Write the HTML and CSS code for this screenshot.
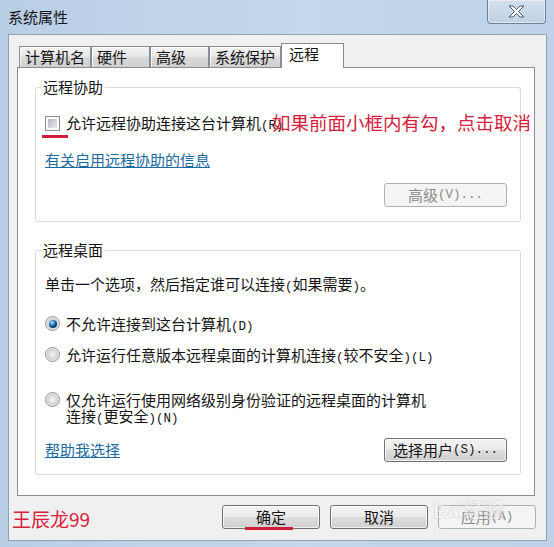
FILE: index.html
```html
<!DOCTYPE html>
<html lang="zh-CN">
<head>
<meta charset="utf-8">
<title>系统属性</title>
<link rel="stylesheet" href="styles.css">
</head>
<body>
<div class="window">
  <div class="titlebar">
    <span class="title">系统属性</span>
    <div class="close">
      <svg width="17" height="13" viewBox="0 0 17 13"><polygon points="1,1 5,1 8.5,4.6 12,1 16,1 10.5,6.5 16,12 12,12 8.5,8.4 5,12 1,12 6.5,6.5" fill="#fff" stroke="#46566b" stroke-width="1" stroke-linejoin="round"/></svg>
    </div>
  </div>
  <div class="client">
    <div class="tabs">
      <div class="tab">计算机名</div>
      <div class="tab">硬件</div>
      <div class="tab">高级</div>
      <div class="tab">系统保护</div>
      <div class="tab active">远程</div>
    </div>
    <div class="panel">
      <div class="group">
        <div class="group-title">远程协助</div>
        <div class="check-row">
          <span class="checkbox"></span>
          <span>允许远程协助连接这台计算机<span class="l">(R)</span></span>
          <span class="mark mark-check"></span>
          <span class="note">如果前面小框内有勾，点击取消</span>
        </div>
        <a class="link link-first">有关启用远程协助的信息</a>
        <div class="btn-row">
          <button class="btn wide disabled">高级<span class="l">(V)...</span></button>
        </div>
      </div>
      <div class="group group2">
        <div class="group-title">远程桌面</div>
        <div class="desc">单击一个选项，然后指定谁可以连接<span class="l">(</span>如果需要<span class="l">)</span>。</div>
        <div class="radio-row r1"><span class="radio on"></span><span>不允许连接到这台计算机<span class="l">(D)</span></span></div>
        <div class="radio-row r2"><span class="radio"></span><span>允许运行任意版本远程桌面的计算机连接<span class="l">(</span>较不安全<span class="l">)(L)</span></span></div>
        <div class="radio-row r3"><span class="radio"></span><span>仅允许运行使用网络级别身份验证的远程桌面的计算机<br>连接<span class="l">(</span>更安全<span class="l">)(N)</span></span></div>
        <div class="bottom-row">
          <a class="link">帮助我选择</a>
          <button class="btn wide">选择用户<span class="l">(S)...</span></button>
        </div>
      </div>
    </div>
    <div class="footer">
      <span class="sign">王辰龙99</span>
      <div class="footer-buttons">
        <button class="btn foot">确定<span class="mark mark-ok"></span></button>
        <button class="btn foot">取消</button>
        <button class="btn foot disabled">应用<span class="l">(A)</span><span class="wm">Bai经验</span></button>
      </div>
    </div>
  </div>
</div>
</body>
</html>
```
FILE: styles.css
```css
body {
  margin: 0;
  width: 554px;
  height: 547px;
  overflow: hidden;
  background: linear-gradient(to right, #b9cfe6, #c4d7eb 55%, #bdd2e8);
  font-family: "Noto Sans CJK SC", sans-serif;
  font-size: 15px;
  color: #151515;
}

.window {
  display: flex;
  flex-direction: column;
  height: 547px;
}

.titlebar {
  height: 34px;
  display: flex;
  justify-content: space-between;
  align-items: flex-start;
  flex: none;
}

.title {
  padding: 9px 0 0 8px;
  line-height: 16px;
}

.close {
  width: 59px;
  height: 24px;
  box-sizing: border-box;
  margin-right: 8px;
  border: 1px solid #6f8199;
  border-top: none;
  border-radius: 0 0 4px 4px;
  background: linear-gradient(#d3dfec, #c0d1e4);
  box-shadow: inset 0 0 0 1px rgba(255, 255, 255, 0.45);
  display: flex;
  align-items: center;
  justify-content: center;
}

.close svg {
  display: block;
}

.client {
  margin: 0 7px 0 8px;
  border: 1px solid #8fa1b6;
  background: #f0f0f0;
  padding: 8px 11px 9px 8px;
}

.l {
  font-family: "Liberation Mono", monospace;
  font-size: 12.5px;
  line-height: 0;
}

/* tabs */
.tabs {
  display: flex;
  align-items: flex-end;
  height: 25px;
  margin-bottom: -1px;
  padding-left: 2px;
  position: relative;
  z-index: 1;
}

.tab {
  box-sizing: border-box;
  height: 21px;
  margin-bottom: 1px;
  min-width: 59px;
  padding: 0 5px;
  line-height: 19px;
  border: 1px solid #898c95;
  border-bottom: none;
  background: linear-gradient(#f4f4f4, #e7e7e7 45%, #d8d8d8 55%, #d0d0d0);
  box-shadow: inset 1px 1px 0 rgba(255, 255, 255, 0.8);
}

.tab.active {
  height: 25px;
  margin-bottom: 0;
  min-width: 63px;
  padding: 0 7px;
  line-height: 19px;
  background: #fff;
  box-shadow: none;
}

/* panel */
.panel {
  background: #fff;
  border: 1px solid #898c95;
  padding: 19px 13px 20px 17px;
}

.group {
  border: 1px solid #d5dbe0;
  border-radius: 3px;
  padding: 0 13px 14px 9px;
}

.group2 {
  margin-top: 28px;
  padding-bottom: 12px;
}

.group-title {
  width: fit-content;
  margin: -9px 0 0 -4px;
  padding: 0 2px;
  background: #fff;
  line-height: 16px;
}

.check-row {
  display: flex;
  align-items: center;
  gap: 6px;
  height: 16px;
  line-height: 16px;
  margin-top: 20px;
  position: relative;
}

.checkbox {
  flex: none;
  width: 15px;
  height: 15px;
  box-sizing: border-box;
  border: 1px solid #8e8f8f;
  padding: 2px;
  background: linear-gradient(135deg, #b3b7bd, #ececed) content-box, #fbfbfb;
}

.note {
  position: absolute;
  left: 227px;
  top: -4px;
  font-size: 18.5px;
  line-height: 22px;
  color: #d4203c;
  white-space: nowrap;
}

.mark {
  position: absolute;
  height: 3px;
  background: #cf1f37;
}

.mark-check {
  left: -3px;
  top: 20px;
  width: 26px;
}

.link {
  display: block;
  width: fit-content;
  color: #1b6aa0;
  text-decoration: underline;
  line-height: 16px;
}

.link-first {
  margin-top: 21px;
}

.btn-row {
  display: flex;
  justify-content: flex-end;
  margin-top: 15px;
}

.btn {
  box-sizing: border-box;
  height: 24px;
  padding: 0;
  border: 1px solid #707070;
  border-radius: 3px;
  background: linear-gradient(#f3f3f3 0%, #ebebeb 48%, #dddddd 52%, #d0d0d0 100%);
  box-shadow: inset 0 0 0 1px rgba(255, 255, 255, 0.7);
  font-family: inherit;
  font-size: 15px;
  color: #151515;
  line-height: 20px;
  display: flex;
  align-items: center;
  justify-content: center;
  position: relative;
}

.btn.wide {
  width: 123px;
}

.btn.disabled {
  border-color: #adb2b5;
  background: #f4f4f4;
  color: #8a8a8a;
  box-shadow: none;
}

.desc {
  margin-top: 18px;
  line-height: 16px;
}

.radio-row {
  display: flex;
  align-items: flex-start;
  gap: 6px;
  line-height: 16px;
}

.r1 { margin-top: 24px; }
.r2 { margin-top: 15px; }
.r3 { margin-top: 29px; }

.radio {
  flex: none;
  width: 15px;
  height: 15px;
  box-sizing: border-box;
  border-radius: 50%;
  border: 1px solid #8f9193;
  background: radial-gradient(circle at 50% 50%, #f5f5f5 0, #e2e3e5 3px, #cfd1d4 5px, #f2f2f2 6.5px);
  display: flex;
  align-items: center;
  justify-content: center;
}

.radio.on::after {
  content: "";
  width: 8px;
  height: 8px;
  border-radius: 50%;
  background: radial-gradient(circle at 38% 32%, #c9e8fc 0, #4b9ad8 2px, #175a9c 3.5px, #0c3e74 4.5px);
}

.bottom-row {
  display: flex;
  justify-content: space-between;
  align-items: center;
  margin-top: 14px;
}

/* footer */
.footer {
  display: flex;
  justify-content: space-between;
  align-items: flex-start;
  margin-top: 9px;
  margin-right: -1px;
}

.sign {
  margin: 2px 0 0 -5px;
  color: #d8223b;
  font-size: 19px;
  line-height: 24px;
}

.footer-buttons {
  display: flex;
  gap: 10px;
}

.btn.foot {
  width: 98px;
}

.mark-ok {
  left: 22px;
  top: 21px;
  width: 48px;
}

.wm {
  position: absolute;
  left: -6px;
  top: -5px;
  font-family: "Liberation Sans", "Noto Sans CJK SC", sans-serif;
  font-size: 20px;
  font-weight: bold;
  color: rgba(255, 255, 255, 0.5);
  -webkit-text-stroke: 0.6px rgba(170, 170, 170, 0.45);
  white-space: nowrap;
}
```
